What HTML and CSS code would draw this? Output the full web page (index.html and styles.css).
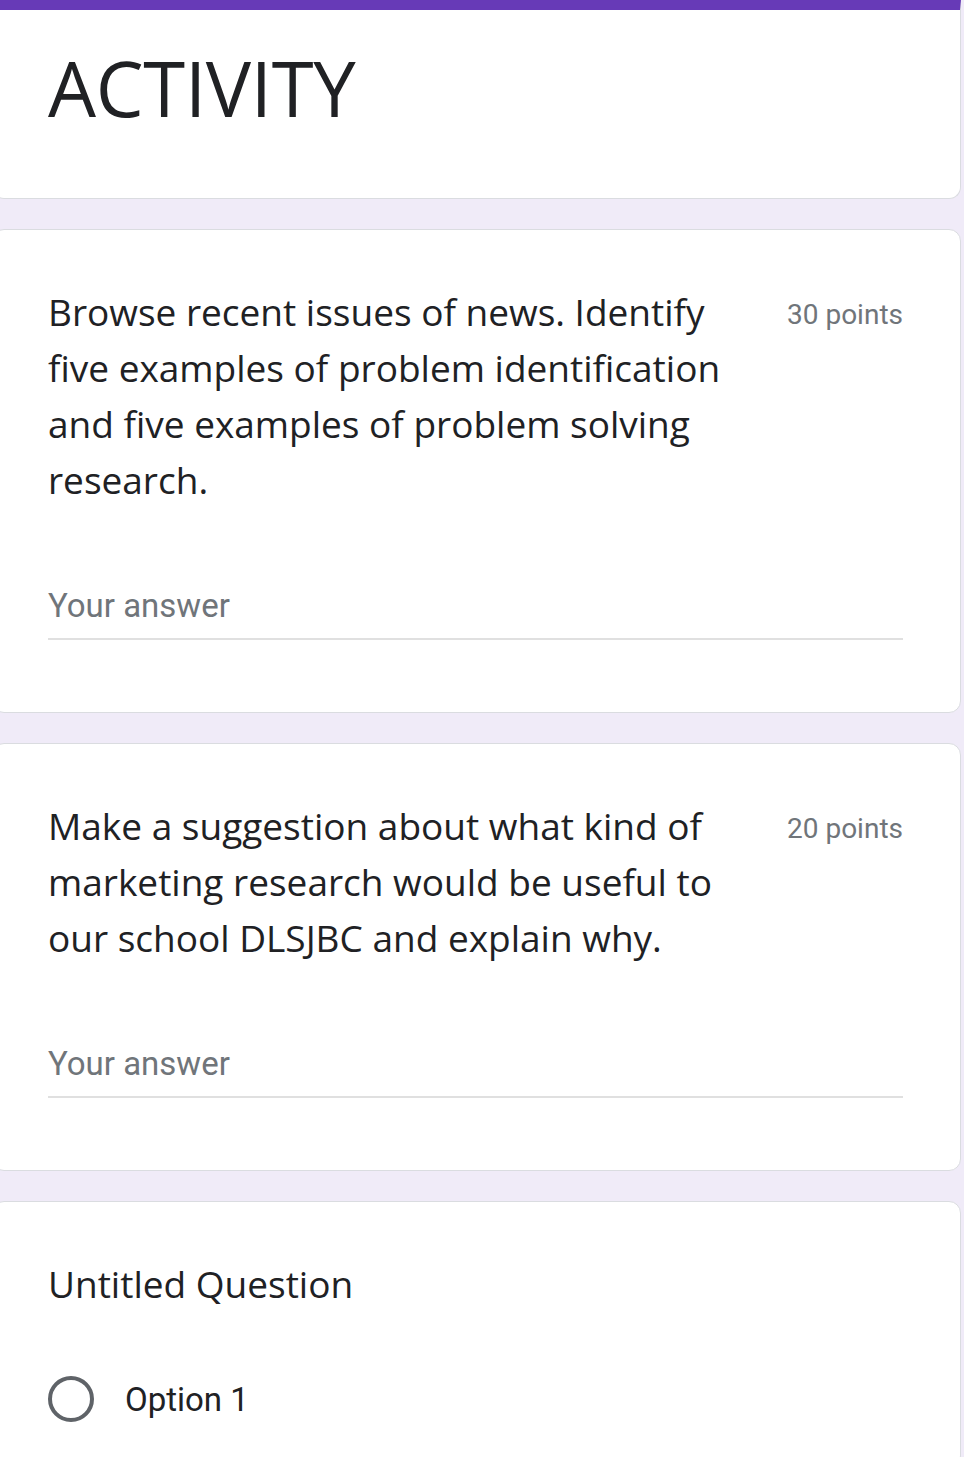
FILE: index.html
```html
<!DOCTYPE html>
<html lang="en">
<head>
<meta charset="utf-8">
<title>ACTIVITY</title>
<link rel="stylesheet" href="styles.css">
</head>
<body>
<main class="form">
  <section class="card header-card">
    <h1 class="form-title">ACTIVITY</h1>
  </section>

  <section class="card question-card">
    <div class="question-head">
      <div class="question-title">Browse recent issues of news. Identify five examples of problem identification and five examples of problem solving research.</div>
      <div class="points">30 points</div>
    </div>
    <div class="answer">Your answer</div>
  </section>

  <section class="card question-card">
    <div class="question-head">
      <div class="question-title">Make a suggestion about what kind of marketing research would be useful to our school DLSJBC and explain why.</div>
      <div class="points">20 points</div>
    </div>
    <div class="answer">Your answer</div>
  </section>

  <section class="card question-card last-card">
    <div class="question-head">
      <div class="question-title">Untitled Question</div>
    </div>
    <label class="option">
      <span class="radio"></span>
      <span class="option-text">Option 1</span>
    </label>
  </section>
</main>
</body>
</html>
```

FILE: styles.css
```css
html, body {
  margin: 0;
  padding: 0;
}

body {
  background: #f0ebf8;
  overflow: hidden;
  font-family: "Open Sans", "Noto Sans", sans-serif;
  color: #202124;
}

.form {
  margin-left: -8px;
  width: 969px;
  display: flex;
  flex-direction: column;
  gap: 30px;
}

.card {
  background: #ffffff;
  border: 1px solid #dadce0;
  border-radius: 12px;
  box-sizing: border-box;
  padding: 0 57px 0 55px;
}

.header-card {
  border-top: 10px solid #673ab7;
  border-radius: 0 0 12px 12px;
  padding-top: 38px;
  padding-bottom: 70px;
}

.form-title {
  margin: 0;
  font-family: "Open Sans", "Noto Sans", sans-serif;
  font-weight: 400;
  font-size: 76px;
  line-height: 80px;
  letter-spacing: -0.3px;
  color: #202124;
}

.question-card {
  padding-top: 54px;
  padding-bottom: 72px;
}

.question-head {
  display: flex;
  align-items: flex-start;
}

.question-title {
  flex: 1;
  font-size: 37px;
  line-height: 56px;
  color: #202124;
}

.points {
  margin-left: 36px;
  font-family: Roboto, "Liberation Sans", sans-serif;
  font-size: 28px;
  line-height: 62px;
  color: #70757a;
  white-space: nowrap;
}

.answer {
  margin-top: 78px;
  padding-bottom: 12px;
  border-bottom: 2px solid #e0e0e0;
  font-family: Roboto, "Liberation Sans", sans-serif;
  font-size: 33px;
  line-height: 40px;
  color: #70757a;
}

.last-card {
  padding-bottom: 40px;
}

.option {
  margin-top: 59px;
  display: flex;
  align-items: center;
  gap: 31px;
  height: 56px;
}

.radio {
  width: 46px;
  height: 46px;
  box-sizing: border-box;
  border: 4.5px solid #5f6368;
  border-radius: 50%;
  flex: none;
}

.option-text {
  font-family: Roboto, "Liberation Sans", sans-serif;
  font-size: 33px;
  color: #202124;
}
```
